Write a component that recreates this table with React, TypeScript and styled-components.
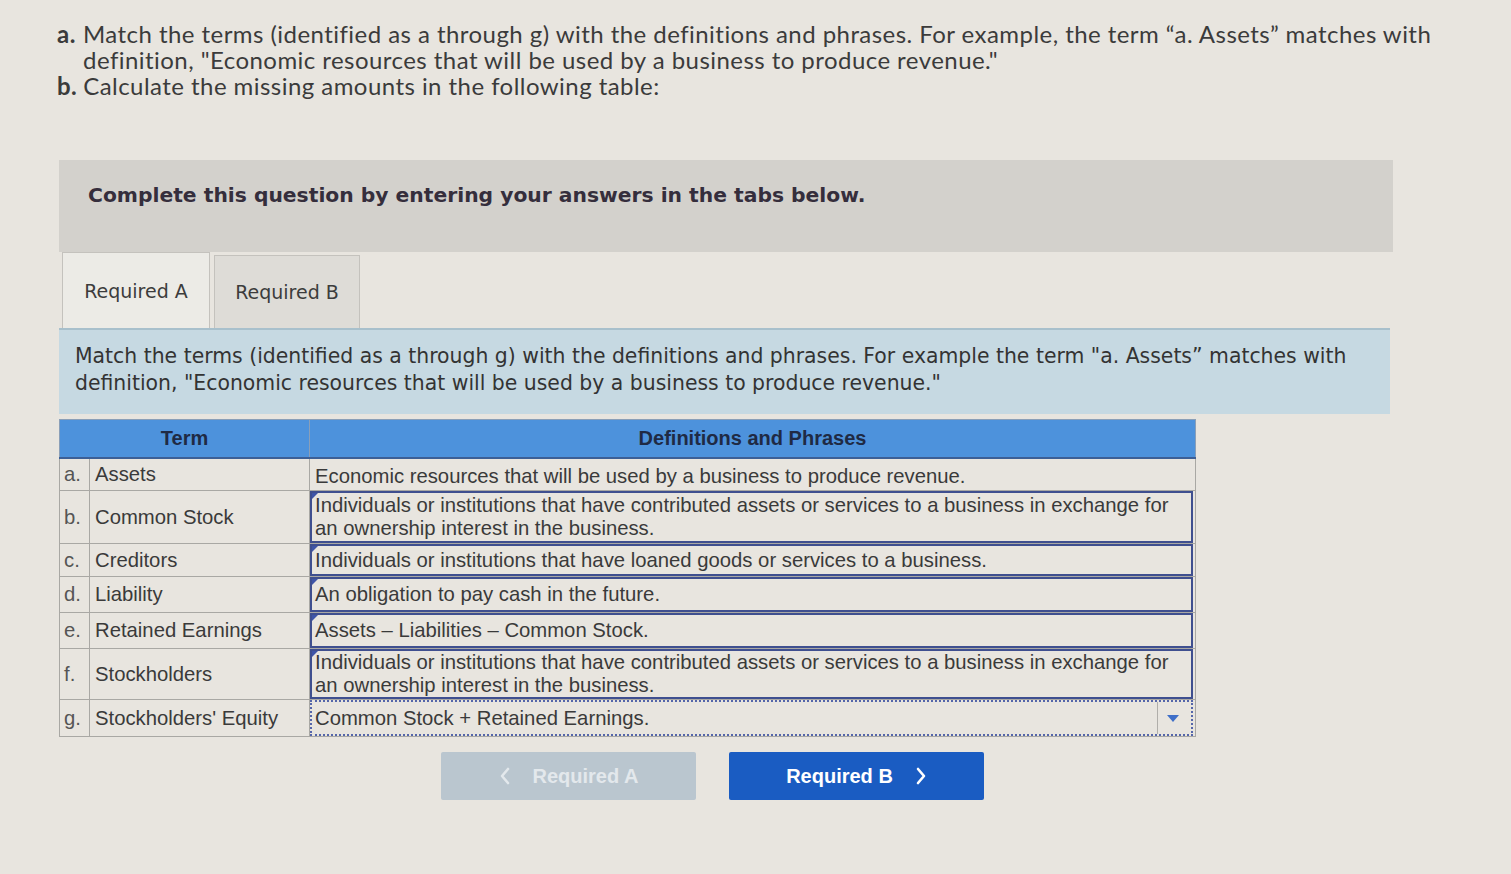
import React from "react";
import styled, { createGlobalStyle } from "styled-components";

const Global = createGlobalStyle`
  html, body { margin: 0; padding: 0; background: #e8e5df; }
  body { width: 1511px; height: 874px; overflow: hidden; }
`;

const Page = styled.div`
  padding: 21px 0 0 57px;
  width: 1511px;
  height: 874px;
  box-sizing: border-box;
  background: #e8e5df;
`;

const Intro = styled.ol`
  list-style: none;
  margin: 0;
  padding: 0;
  font-family: Lato, "Open Sans", sans-serif;
  font-size: 24px;
  letter-spacing: 0.45px;
  line-height: 26px;
  color: #3b3b3b;
  width: 1400px;
`;

const IntroItem = styled.li`
  display: flex;
  gap: 6px;
`;

const IntroLabel = styled.span`
  font-weight: 700;
  flex: 0 0 20px;
`;

const Banner = styled.div`
  margin-top: 61px;
  margin-left: 2px;
  width: 1334px;
  height: 92px;
  background: #d3d1cc;
  display: flex;
  align-items: flex-start;
  padding: 23px 0 0 29px;
  box-sizing: border-box;
  font-family: "DejaVu Sans", Verdana, sans-serif;
  font-weight: 700;
  font-size: 20.3px;
  color: #352e3c;
`;

const Tabs = styled.div`
  display: flex;
  align-items: flex-end;
  gap: 4px;
  margin-left: 5px;
  height: 76px;
`;

const Tab = styled.div<{ $active?: boolean }>`
  width: ${(p) => (p.$active ? 148 : 146)}px;
  height: ${(p) => (p.$active ? 76 : 73)}px;
  box-sizing: border-box;
  border: 1px solid #c4c2bd;
  border-bottom: none;
  background: ${(p) => (p.$active ? "#ecebe6" : "#dedcd7")};
  display: flex;
  align-items: center;
  justify-content: center;
  font-family: "DejaVu Sans", Verdana, sans-serif;
  font-size: 19px;
  color: #3c3c3c;
`;

const Instructions = styled.div`
  margin-left: 2px;
  width: 1331px;
  height: 86px;
  box-sizing: border-box;
  background: #c6d9e2;
  border-top: 2px solid #a8c0cc;
  padding: 13px 16px 0 16px;
  font-family: "DejaVu Sans", Verdana, sans-serif;
  font-size: 20.4px;
  line-height: 27px;
  color: #333;
`;

const Table = styled.table`
  margin-top: 5px;
  margin-left: 2px;
  border-collapse: collapse;
  width: 1136px;
  table-layout: fixed;
  font-family: "Liberation Sans", Arial, sans-serif;
  font-size: 20.3px;
  color: #3a3a3a;
`;

const HeadCell = styled.th`
  background: #4d92dc;
  border: 1px solid #8a9fb8;
  border-bottom: 2px solid #3c5f96;
  height: 37px;
  padding: 0;
  font-weight: 700;
  font-size: 20px;
  color: #1f2a44;
  text-align: center;
`;

const LetterCell = styled.td`
  border: 1px solid #a9a8a4;
  padding: 0 0 0 4px;
  color: #555;
  vertical-align: middle;
`;

const TermCell = styled.td`
  border: 1px solid #a9a8a4;
  padding: 0 0 0 5px;
  vertical-align: middle;
  white-space: nowrap;
`;

const DefCell = styled.td<{ $h: number }>`
  border: 1px solid #a9a8a4;
  padding: 0;
  vertical-align: middle;
  height: ${(p) => p.$h}px;
`;

const PlainDef = styled.div`
  padding: 2px 5px 0;
  line-height: 22px;
`;

const SelectBox = styled.div<{ $dotted?: boolean }>`
  position: relative;
  box-sizing: border-box;
  height: 100%;
  margin: 0 2px 0 0;
  border: 2px ${(p) => (p.$dotted ? "dotted" : "solid")} ${(p) => (p.$dotted ? "#5566aa" : "#3f4f8f")};
  padding: 0 3px;
  line-height: 23px;
  display: flex;
  align-items: center;
  &::before {
    content: "";
    display: ${(p) => (p.$dotted ? "none" : "block")};
    position: absolute;
    left: 0;
    top: 0;
    border-top: 6px solid #3f55a8;
    border-right: 6px solid transparent;
  }
`;

const SelectText = styled.span`
  flex: 1;
`;

const Caret = styled.span`
  align-self: stretch;
  width: 30px;
  border-left: 1px solid #b0aeaa;
  display: flex;
  align-items: center;
  justify-content: center;
  &::after {
    content: "";
    border-top: 7px solid #3f6fc8;
    border-left: 6px solid transparent;
    border-right: 6px solid transparent;
  }
`;

const Nav = styled.div`
  display: flex;
  gap: 33px;
  margin-top: 15px;
  margin-left: 384px;
`;

const NavButton = styled.button<{ $primary?: boolean }>`
  width: 255px;
  height: 48px;
  border: none;
  border-radius: 2px;
  background: ${(p) => (p.$primary ? "#1a5cc2" : "#bac6cf")};
  color: ${(p) => (p.$primary ? "#ffffff" : "#e3e8ec")};
  font-family: "Liberation Sans", Arial, sans-serif;
  font-weight: 700;
  font-size: 20px;
  display: flex;
  align-items: center;
  justify-content: center;
  gap: 22px;
  cursor: pointer;
`;

const Chevron = ({ dir }: { dir: "left" | "right" }) => (
  <svg width="12" height="18" viewBox="0 0 12 18" fill="none">
    <path
      d={dir === "left" ? "M9 2 L3 9 L9 16" : "M3 2 L9 9 L3 16"}
      stroke="currentColor"
      strokeWidth="2.6"
      strokeLinecap="round"
      strokeLinejoin="round"
    />
  </svg>
);

type Row = { l: string; term: string; def: string; h: number; kind: "plain" | "select" | "dotted" };

const rows: Row[] = [
  { l: "a.", term: "Assets", def: "Economic resources that will be used by a business to produce revenue.", h: 31, kind: "plain" },
  { l: "b.", term: "Common Stock", def: "Individuals or institutions that have contributed assets or services to a business in exchange for an ownership interest in the business.", h: 52, kind: "select" },
  { l: "c.", term: "Creditors", def: "Individuals or institutions that have loaned goods or services to a business.", h: 32, kind: "select" },
  { l: "d.", term: "Liability", def: "An obligation to pay cash in the future.", h: 35, kind: "select" },
  { l: "e.", term: "Retained Earnings", def: "Assets \u2013 Liabilities \u2013 Common Stock.", h: 35, kind: "select" },
  { l: "f.", term: "Stockholders", def: "Individuals or institutions that have contributed assets or services to a business in exchange for an ownership interest in the business.", h: 49, kind: "select" },
  { l: "g.", term: "Stockholders' Equity", def: "Common Stock + Retained Earnings.", h: 36, kind: "dotted" },
];

export default function App() {
  return (
    <Page>
      <Global />
      <Intro>
        <IntroItem>
          <IntroLabel>a.</IntroLabel>
          <span>
            Match the terms (identified as a through g) with the definitions and phrases. For example, the term
            “a. Assets” matches with definition, "Economic resources that will be used by a business to produce
            revenue."
          </span>
        </IntroItem>
        <IntroItem>
          <IntroLabel>b.</IntroLabel>
          <span>Calculate the missing amounts in the following table:</span>
        </IntroItem>
      </Intro>

      <Banner>Complete this question by entering your answers in the tabs below.</Banner>

      <Tabs>
        <Tab $active>Required A</Tab>
        <Tab>Required B</Tab>
      </Tabs>

      <Instructions>
        Match the terms (identified as a through g) with the definitions and phrases. For example the term "a.
        Assets” matches with definition, "Economic resources that will be used by a business to produce revenue."
      </Instructions>

      <Table>
        <colgroup>
          <col style={{ width: 30 }} />
          <col style={{ width: 220 }} />
          <col style={{ width: 886 }} />
        </colgroup>
        <thead>
          <tr>
            <HeadCell colSpan={2}>Term</HeadCell>
            <HeadCell>Definitions and Phrases</HeadCell>
          </tr>
        </thead>
        <tbody>
          {rows.map((r) => (
            <tr key={r.l}>
              <LetterCell>{r.l}</LetterCell>
              <TermCell>{r.term}</TermCell>
              <DefCell $h={r.h}>
                {r.kind === "plain" ? (
                  <PlainDef>{r.def}</PlainDef>
                ) : (
                  <SelectBox $dotted={r.kind === "dotted"}>
                    <SelectText>{r.def}</SelectText>
                    {r.kind === "dotted" && <Caret />}
                  </SelectBox>
                )}
              </DefCell>
            </tr>
          ))}
        </tbody>
      </Table>

      <Nav>
        <NavButton>
          <Chevron dir="left" />
          Required A
        </NavButton>
        <NavButton $primary>
          Required B
          <Chevron dir="right" />
        </NavButton>
      </Nav>
    </Page>
  );
}
